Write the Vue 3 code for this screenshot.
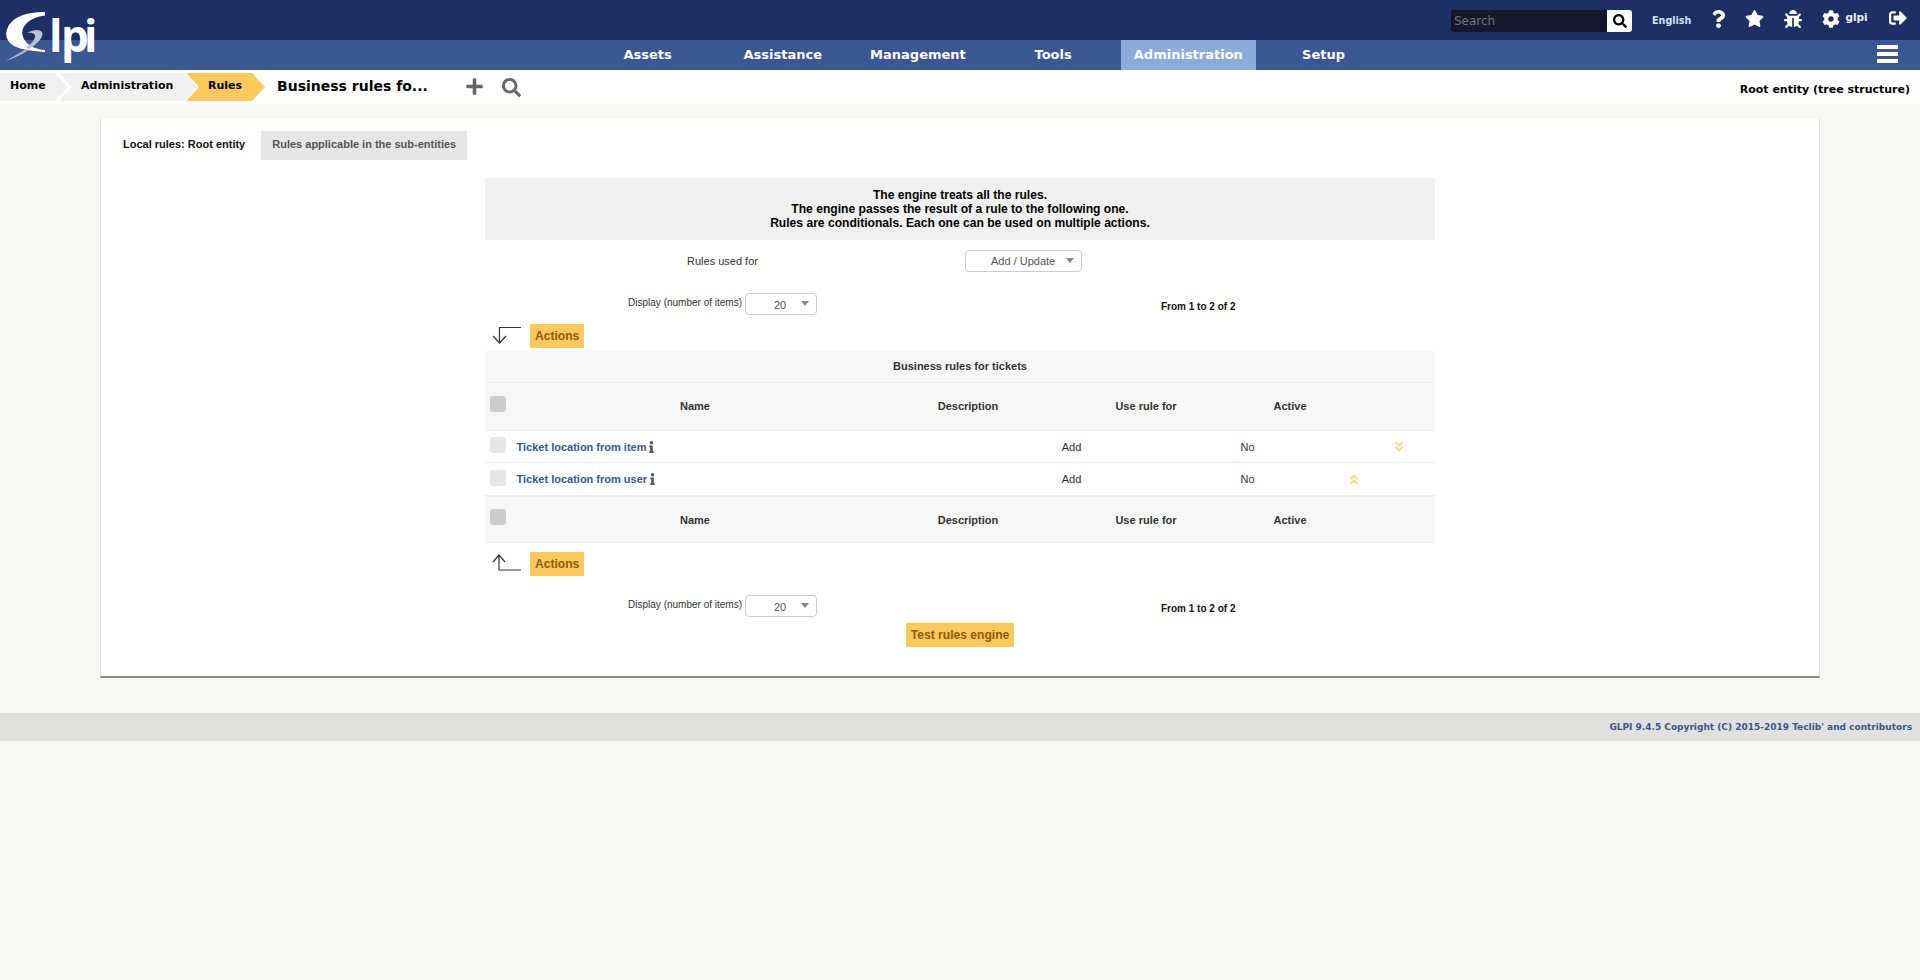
<script setup>
const menu = ['Assets', 'Assistance', 'Management', 'Tools', 'Administration', 'Setup']
const heads = ['Name', 'Description', 'Use rule for', 'Active']
const rules = [
  { name: 'Ticket location from item', use: 'Add', active: 'No', down: true },
  { name: 'Ticket location from user', use: 'Add', active: 'No', up: true }
]
const infoPath = 'M20 424.229h20V279.771H20c-11.046 0-20-8.954-20-20V212c0-11.046 8.954-20 20-20h112c11.046 0 20 8.954 20 20v212.229h20c11.046 0 20 8.954 20 20V492c0 11.046-8.954 20-20 20H20c-11.046 0-20-8.954-20-20v-47.771c0-11.046 8.954-20 20-20zM96 0C56.235 0 24 32.235 24 72s32.235 72 72 72 72-32.235 72-72S135.764 0 96 0z'
const searchPath = 'M505 442.7L405.3 343c-4.5-4.5-10.6-7-17-7H372c27.6-35.3 44-79.7 44-128C416 93.1 322.9 0 208 0S0 93.1 0 208s93.1 208 208 208c48.3 0 92.7-16.4 128-44v16.3c0 6.4 2.5 12.5 7 17l99.7 99.7c9.4 9.4 24.6 9.4 33.9 0l28.3-28.3c9.4-9.4 9.4-24.6.1-34zM208 336c-70.7 0-128-57.2-128-128 0-70.7 57.2-128 128-128 70.7 0 128 57.2 128 128 0 70.7-57.2 128-128 128z'
</script>

<template>
  <div class="page">
    <header class="header">
      <svg class="logo" viewBox="0 0 100 66" width="100" height="66">
        <path fill="#fff" d="M45 12 C30 12 14 15 8 27 C4 35 7 42 14 46 C23 50.500 34 51 45 52 L45 50 C38 49.500 30 47 26 42 C21 36 21 29 26 24 C30 19 38 16.500 45 15.500 Z" />
        <path fill="#b9c3d6" d="M27 33 C32 30 38 29 41 31 C44 33.500 42 38 38 42 C35 45 32 47 29 49 L26 48 C31 44 35 40 35 36 C35 33 31 32.500 27 33 Z" />
        <path fill="#a9b5cc" d="M6 61 C12 57 20 53 26 49 L29 50 C21 55 13 58.500 6 61 Z" />
        <text class="logoText" x="49 61 84" y="52">lpi</text>
      </svg>
      <div class="topBar">
        <div class="searchBox">
          <input class="searchInput" placeholder="Search" />
          <span class="searchBtn">
            <svg viewBox="0 0 512 512" width="14" height="14"><path :d="searchPath" fill="#000" /></svg>
          </span>
        </div>
        <span class="lang">English</span>
        <svg class="helpIcon" viewBox="0 0 384 512" width="15" height="18"><path fill="#fff" d="M202.021 0C122.202 0 70.503 32.703 29.914 91.026c-7.363 10.58-5.093 25.086 5.178 32.874l43.138 32.709c10.373 7.865 25.132 6.026 33.253-4.148 25.049-31.381 43.63-49.449 82.757-49.449 30.764 0 68.816 19.799 68.816 49.631 0 22.552-18.617 34.134-48.993 51.164-35.423 19.86-82.299 44.576-82.299 106.405V320c0 13.255 10.745 24 24 24h72.471c13.255 0 24-10.745 24-24v-5.773c0-42.86 125.268-44.645 125.268-160.627C377.504 66.256 286.902 0 202.021 0zM192 373.459c-38.196 0-69.271 31.075-69.271 69.271 0 38.195 31.075 69.27 69.271 69.27s69.271-31.075 69.271-69.271-31.075-69.27-69.271-69.27z" /></svg>
        <svg class="starIcon" viewBox="0 0 576 512" width="19" height="17"><path fill="#fff" d="M259.3 17.8L194 150.2 47.9 171.5c-26.2 3.8-36.7 36.1-17.7 54.6l105.7 103-25 145.5c-4.5 26.3 23.2 46 46.4 33.7L288 439.6l130.7 68.7c23.2 12.2 50.9-7.400 46.4-33.7l-25-145.5 105.7-103c19-18.5 8.500-50.8-17.7-54.6L382 150.2 316.7 17.800c-11.700-23.600-45.600-23.900-57.400 0z" /></svg>
        <svg class="bugIcon" viewBox="0 0 512 512" width="18" height="18"><path fill="#fff" d="M511.988 288.9c-.478 17.43-15.217 31.1-32.653 31.1H424v16c0 21.864-4.882 42.584-13.6 61.145l60.228 60.228c12.496 12.497 12.496 32.758 0 45.255-12.498 12.497-32.759 12.496-45.256 0l-54.736-54.736C345.886 467.965 314.351 480 280 480V236c0-6.627-5.373-12-12-12h-24c-6.627 0-12 5.373-12 12v244c-34.351 0-65.886-12.035-90.636-32.108l-54.736 54.736c-12.498 12.497-32.759 12.496-45.256 0-12.496-12.497-12.496-32.758 0-45.255l60.228-60.228C92.882 378.584 88 357.864 88 336v-16H32.666C15.23 320 .491 306.33.013 288.9-.484 270.816 14.028 256 32 256h56v-58.745l-46.628-46.628c-12.496-12.497-12.496-32.758 0-45.255 12.498-12.497 32.758-12.497 45.256 0L141.255 160h229.489l54.627-54.627c12.498-12.497 32.758-12.497 45.256 0 12.496 12.497 12.496 32.758 0 45.255L424 197.255V256h56c17.972 0 32.484 14.816 31.988 32.9zM257 0c-61.856 0-112 50.144-112 112h224C369 50.144 318.856 0 257 0z" /></svg>
        <svg class="gearIcon" viewBox="0 0 512 512" width="18" height="18"><path fill="#fff" d="M487.4 315.7l-42.6-24.6c4.3-23.2 4.3-47 0-70.2l42.6-24.6c4.9-2.8 7.1-8.6 5.5-14-11.1-35.6-30-67.8-54.7-94.6-3.8-4.1-10-5.1-14.8-2.3L380.8 110c-17.9-15.4-38.5-27.3-60.8-35.1V25.8c0-5.6-3.9-10.5-9.4-11.7-36.7-8.2-74.3-7.8-109.2 0-5.5 1.2-9.4 6.1-9.4 11.7V75c-22.2 7.9-42.8 19.8-60.8 35.1L88.7 85.5c-4.9-2.8-11-1.9-14.8 2.3-24.7 26.7-43.6 58.9-54.7 94.6-1.7 5.4.6 11.2 5.5 14L67.3 221c-4.3 23.2-4.3 47 0 70.2l-42.6 24.6c-4.9 2.8-7.1 8.6-5.5 14 11.1 35.6 30 67.8 54.7 94.6 3.8 4.1 10 5.1 14.8 2.3l42.6-24.6c17.9 15.4 38.5 27.3 60.8 35.1v49.2c0 5.6 3.9 10.5 9.4 11.7 36.7 8.2 74.3 7.8 109.2 0 5.5-1.2 9.4-6.1 9.4-11.7v-49.2c22.2-7.9 42.8-19.8 60.8-35.1l42.6 24.6c4.9 2.8 11 1.9 14.8-2.3 24.7-26.7 43.6-58.9 54.7-94.6 1.5-5.5-.7-11.3-5.6-14.1zM256 336c-44.1 0-80-35.9-80-80s35.9-80 80-80 80 35.9 80 80-35.9 80-80 80z" /></svg>
        <span class="user">glpi</span>
        <svg class="outIcon" viewBox="0 0 512 512" width="18" height="18"><path fill="#fff" d="M497 273L329 441c-15 15-41 4.500-41-17v-96H152c-13.300 0-24-10.700-24-24v-96c0-13.300 10.700-24 24-24h136V88c0-21.400 25.900-32 41-17l168 168c9.300 9.400 9.300 24.600 0 34zM192 436v-40c0-6.600-5.400-12-12-12H96c-17.700 0-32-14.300-32-32V160c0-17.700 14.300-32 32-32h84c6.600 0 12-5.400 12-12V76c0-6.600-5.400-12-12-12H96c-53 0-96 43-96 96v192c0 53 43 96 96 96h84c6.600 0 12-5.400 12-12z" /></svg>
      </div>
      <nav class="menuBar">
        <a v-for="m in menu" :key="m" class="menuItem" :class="{ active: m === 'Administration' }">{{ m }}</a>
        <span class="burger"><i></i><i></i><i></i></span>
      </nav>
    </header>

    <div class="crumbBar">
      <a class="crumb home">Home</a>
      <a class="crumb admin">Administration</a>
      <a class="crumb current">Rules</a>
      <span class="pageTitle">Business rules fo...</span>
      <svg class="plusIcon" viewBox="0 0 448 512" width="17" height="19"><path fill="#666" d="M416 208H272V64c0-17.670-14.330-32-32-32h-32c-17.670 0-32 14.330-32 32v144H32c-17.670 0-32 14.330-32 32v32c0 17.670 14.330 32 32 32h144v144c0 17.670 14.330 32 32 32h32c17.670 0 32-14.330 32-32V304h144c17.670 0 32-14.330 32-32v-32c0-17.670-14.330-32-32-32z" /></svg>
      <svg class="lensIcon" viewBox="0 0 512 512" width="19" height="19"><path fill="#666" :d="searchPath" /></svg>
      <span class="entity">Root entity (tree structure)</span>
    </div>

    <main class="card">
      <div class="tabs">
        <a class="tab on">Local rules: Root entity</a>
        <a class="tab">Rules applicable in the sub-entities</a>
      </div>

      <div class="content">
        <div class="info">
          The engine treats all the rules.<br />
          The engine passes the result of a rule to the following one.<br />
          Rules are conditionals. Each one can be used on multiple actions.
        </div>

        <div class="usedFor">
          <span class="usedLabel">Rules used for</span>
          <div class="select wide"><span>Add / Update</span><i class="caret"></i></div>
        </div>

        <div class="pager first">
          <span class="pagerLabel">Display (number of items)</span>
          <div class="select small"><span>20</span><i class="caret"></i></div>
          <span class="pagerCount">From 1 to 2 of 2</span>
        </div>

        <div class="massive top">
          <svg class="bend" viewBox="0 0 30 18" width="30" height="18">
            <path d="M29 1.500H7.500V17M1 10l6.500 7 6.500-7" fill="none" stroke="#333" stroke-width="1.200" />
          </svg>
          <a class="btn">Actions</a>
        </div>

        <div class="table">
          <div class="tableTitle">Business rules for tickets</div>
          <div class="headRow">
            <span class="check dark"></span>
            <span v-for="h in heads" :key="h">{{ h }}</span>
          </div>
          <div v-for="r in rules" :key="r.name" class="bodyRow">
            <span class="check"></span>
            <span class="nameCell">
              <a class="ruleLink">{{ r.name }}</a>
              <svg viewBox="0 0 192 512" width="5" height="12"><path fill="#555" :d="infoPath" /></svg>
            </span>
            <span class="mid">{{ r.use }}</span>
            <span class="mid">{{ r.active }}</span>
            <span class="mid">
              <svg v-if="r.up" viewBox="0 0 320 512" width="10" height="13"><path fill="#fadb8e" d="M177 255.700l136 136c9.400 9.400 9.400 24.600 0 33.900l-22.600 22.600c-9.400 9.400-24.600 9.400-33.900 0L160 351.900l-96.400 96.400c-9.400 9.400-24.600 9.400-33.900 0L7 425.700c-9.400-9.400-9.400-24.600 0-33.900l136-136c9.400-9.500 24.600-9.500 34-.100zm-34-192L7 199.700c-9.400 9.400-9.400 24.600 0 33.900l22.600 22.600c9.400 9.400 24.600 9.400 33.900 0l96.400-96.400 96.400 96.400c9.400 9.400 24.600 9.400 33.900 0l22.600-22.600c9.400-9.400 9.400-24.600 0-33.900l-136-136c-9.400-9.400-24.600-9.400-34-.100z" /></svg>
            </span>
            <span class="mid">
              <svg v-if="r.down" viewBox="0 0 320 512" width="10" height="13"><path fill="#fadb8e" d="M143 256.300L7 120.300c-9.400-9.400-9.400-24.600 0-33.900l22.600-22.600c9.400-9.400 24.600-9.400 33.900 0l96.400 96.400 96.400-96.400c9.400-9.400 24.600-9.400 33.900 0L313 86.300c9.400 9.400 9.400 24.600 0 33.900l-136 136c-9.400 9.500-24.600 9.500-34 .100zm34 192l136-136c9.400-9.400 9.400-24.600 0-33.900l-22.600-22.600c-9.400-9.400-24.600-9.400-33.900 0L160 352.100l-96.400-96.400c-9.400-9.400-24.600-9.400-33.900 0L7 278.300c-9.400 9.400-9.400 24.600 0 33.900l136 136c9.400 9.500 24.600 9.500 34 .100z" /></svg>
            </span>
          </div>
          <div class="headRow foot">
            <span class="check dark"></span>
            <span v-for="h in heads" :key="h">{{ h }}</span>
          </div>
        </div>

        <div class="massive bottom">
          <svg class="bend" viewBox="0 0 30 18" width="30" height="18">
            <path d="M29 16H7V1M1 8l6-7 6 7" fill="none" stroke="#333" stroke-width="1.200" />
          </svg>
          <a class="btn">Actions</a>
        </div>

        <div class="pager second">
          <span class="pagerLabel">Display (number of items)</span>
          <div class="select small"><span>20</span><i class="caret"></i></div>
          <span class="pagerCount">From 1 to 2 of 2</span>
        </div>

        <div class="testRow"><a class="btn test">Test rules engine</a></div>
      </div>
    </main>

    <footer class="footer">GLPI 9.4.5 Copyright (C) 2015-2019 Teclib' and contributors</footer>
  </div>
</template>

<style>
html, body {
  background: #f8f7f3;
}
</style>

<style scoped>
.page {
  min-height: 980px;
  background: #f8f7f3;
  font-family: "Liberation Sans", Arial, sans-serif;
  font-size: 11px;
  color: #333;
}

/* header */
.header {
  position: relative;
}

.logo {
  position: absolute;
  left: 0;
  top: 0;
  z-index: 2;
}

.logoText {
  font-family: "Open Sans", sans-serif;
  font-size: 44px;
  font-weight: 700;
  fill: #fff;
}

.topBar {
  height: 40px;
  background: #1e2f64;
  display: flex;
  align-items: center;
  padding-left: 1451px;
  box-sizing: border-box;
}

.searchBox {
  display: flex;
  width: 181px;
  height: 22px;
  border-radius: 3px;
  overflow: hidden;
  margin-top: 1px;
}

.searchInput {
  width: 156px;
  border: 0;
  outline: 0;
  padding: 0 3px;
  box-sizing: border-box;
  background: #14162c;
  color: #777;
  font-family: "DejaVu Sans", sans-serif;
  font-size: 12px;
}

.searchInput::placeholder {
  color: #777;
  opacity: 1;
}

.searchBtn {
  width: 25px;
  background: #fff;
  display: flex;
  align-items: center;
  justify-content: center;
}

.lang {
  margin-left: 20px;
  color: #d6e1f3;
  font-family: "DejaVu Sans", sans-serif;
  font-weight: bold;
  font-size: 9.600px;
}

.helpIcon {
  margin-left: 20px;
  margin-top: -3px;
}

.starIcon {
  margin-left: 19px;
  margin-top: -3px;
}

.bugIcon {
  margin-left: 20px;
  margin-top: -3px;
}

.gearIcon {
  margin-left: 20px;
  margin-top: -3px;
}

.user {
  margin-left: 5px;
  margin-top: -7px;
  color: #e6ecf7;
  font-family: "DejaVu Sans", sans-serif;
  font-weight: bold;
  font-size: 10.500px;
}

.outIcon {
  margin-left: 21.500px;
  margin-top: -4px;
}

.menuBar {
  height: 30px;
  background: #3a5693;
  display: flex;
  padding-left: 580px;
  position: relative;
}

.menuItem {
  width: 135.200px;
  line-height: 29px;
  text-align: center;
  color: #fff;
  font-family: "DejaVu Sans", sans-serif;
  font-weight: bold;
  font-size: 13px;
}

.menuItem.active {
  background: #8cabdb;
}

.burger {
  position: absolute;
  right: 22px;
  top: 5px;
  width: 21px;
  display: flex;
  flex-direction: column;
  gap: 3px;
}

.burger i {
  height: 4px;
  background: #fff;
}

/* breadcrumbs */
.crumbBar {
  height: 34px;
  background: #fff;
  display: flex;
  align-items: flex-start;
  padding-top: 3px;
  box-sizing: border-box;
  font-family: "DejaVu Sans", sans-serif;
}

.crumb {
  height: 28px;
  line-height: 26px;
  box-sizing: border-box;
  font-weight: bold;
  font-size: 11px;
  color: #000;
  background: #f0f0f0;
}

.home {
  width: 68px;
  padding-left: 10px;
  clip-path: polygon(0 0, 55px 0, 68px 50%, 55px 100%, 0 100%);
}

.admin {
  width: 138px;
  margin-left: -9px;
  padding-left: 22px;
  clip-path: polygon(0 0, 125px 0, 138px 50%, 125px 100%, 0 100%, 13px 50%);
}

.current {
  width: 79px;
  margin-left: -11px;
  padding-left: 22px;
  background: #fec95c;
  clip-path: polygon(0 0, 66px 0, 79px 50%, 66px 100%, 0 100%, 13px 50%);
}

.pageTitle {
  margin-left: 12px;
  font-weight: bold;
  font-size: 14px;
  line-height: 26px;
  color: #000;
}

.plusIcon {
  margin-left: 38px;
  margin-top: 4px;
}

.lensIcon {
  margin-left: 19px;
  margin-top: 5px;
}

.entity {
  margin-left: auto;
  margin-right: 10px;
  margin-top: 10px;
  font-weight: bold;
  font-size: 11px;
  color: #000;
}

/* main card */
.card {
  width: 1720px;
  margin: 15px 0 35px 100px;
  background: #fff;
  border: 1px solid #ddd;
  border-top: 0;
  border-bottom: 2px solid #888;
  box-sizing: border-box;
  padding: 12px 0 29px;
}

.tabs {
  display: flex;
  align-items: stretch;
  height: 29px;
  font-weight: bold;
}

.tab {
  line-height: 27px;
  padding: 0 11px;
  color: #555;
  background: #e6e6e6;
}

.tab.on {
  margin-left: 22px;
  margin-right: 5px;
  color: #111;
  background: none;
  padding: 0 11px 0 0;
}

.content {
  width: 950px;
  margin: 18px auto 0;
}

.info {
  background: #f0f0f0;
  padding: 10px 0;
  text-align: center;
  font-size: 12.100px;
  line-height: 14px;
  font-weight: bold;
  color: #000;
}

.usedFor {
  display: flex;
  align-items: center;
  margin-top: 10px;
}

.usedLabel {
  width: 475px;
  text-align: center;
}

.select {
  height: 22px;
  box-sizing: border-box;
  border: 1px solid #ccc;
  border-radius: 4px;
  display: flex;
  align-items: center;
  position: relative;
  color: #555;
  font-size: 11px;
}

.select.wide {
  width: 117px;
  margin-left: 5px;
  padding-left: 25px;
}

.select.small {
  width: 72px;
  margin-left: 3px;
  padding-left: 28px;
  padding-top: 1px;
}

.caret {
  position: absolute;
  right: 7px;
  top: 7px;
  border: 4px solid transparent;
  border-top: 5px solid #888;
  border-bottom: 0;
}

.pager {
  display: flex;
  align-items: center;
}

.pager.first {
  margin-top: 21px;
}

.pager.second {
  margin-top: 19px;
}

.pagerLabel {
  width: 257px;
  text-align: right;
  font-size: 10px;
  margin-top: -3px;
}

.pagerCount {
  margin-left: 344px;
  margin-top: 5px;
  font-weight: bold;
  font-size: 10px;
  color: #111;
}

.massive {
  display: flex;
  align-items: center;
}

.massive.top {
  margin-top: 9px;
}

.massive.bottom {
  margin-top: 9px;
}

.bend {
  margin-left: 7px;
  margin-right: 8px;
  margin-top: -2px;
}

.btn {
  display: inline-block;
  height: 24px;
  line-height: 24px;
  padding: 0 5px;
  box-sizing: border-box;
  background: #fec95c;
  color: #8f5a0a;
  font-weight: bold;
  font-size: 12.100px;
}

.testRow {
  margin-top: 6px;
  text-align: center;
  height: 24px;
}

/* table */
.table {
  margin-top: 3px;
  font-size: 11px;
}

.tableTitle {
  height: 32px;
  line-height: 31px;
  text-align: center;
  font-weight: bold;
  background: #f7f7f7;
  border-bottom: 1px solid #eee;
  box-sizing: border-box;
}

.headRow {
  display: grid;
  grid-template-columns: 31px 358px 188px 168px 120px 85px;
  height: 48px;
  background: #f7f7f7;
  border-bottom: 1px solid #eee;
  box-sizing: border-box;
  font-weight: bold;
  line-height: 47px;
  text-align: center;
}

.headRow.foot {
  height: 47px;
  border-top: 1px solid #eee;
}

.bodyRow {
  display: grid;
  grid-template-columns: 31px 465px 181px 171px 42px 48px 12px;
  align-items: center;
  height: 33px;
  border-bottom: 1px solid #eee;
  box-sizing: border-box;
}

.bodyRow:nth-of-type(3) {
  height: 32px;
}

.check {
  display: block;
  width: 16px;
  height: 16px;
  margin-left: 5px;
  border-radius: 3px;
  background: #e6e6e6;
}

.bodyRow .check {
  margin-top: -3px;
}

.check.dark {
  background: #ccc;
  margin-top: 13px;
}

.headRow.foot .check.dark {
  margin-top: 12px;
}

.nameCell {
  display: flex;
  align-items: center;
  gap: 2.500px;
  padding-left: 0.500px;
}

.ruleLink {
  color: #3a5693;
  font-weight: bold;
  font-size: 11px;
}

.mid {
  text-align: center;
}

.mid svg {
  display: inline-block;
  vertical-align: middle;
}

.footer {
  height: 28px;
  line-height: 28px;
  background: #e1e0dc;
  text-align: right;
  padding-right: 8px;
  color: #3a5693;
  font-family: "DejaVu Sans", sans-serif;
  font-weight: bold;
  font-size: 9px;
}
</style>
